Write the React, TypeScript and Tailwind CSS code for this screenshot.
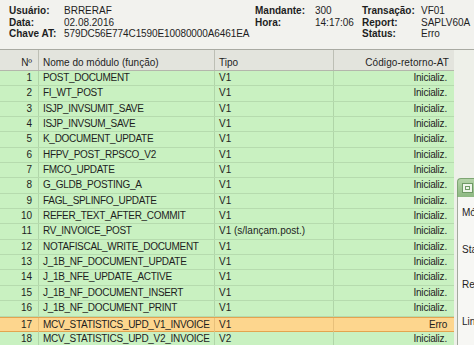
import React from "react";

const rows: [string, string, string][] = [
  ["POST_DOCUMENT", "V1", "Inicializ."],
  ["FI_WT_POST", "V1", "Inicializ."],
  ["ISJP_INVSUMIT_SAVE", "V1", "Inicializ."],
  ["ISJP_INVSUM_SAVE", "V1", "Inicializ."],
  ["K_DOCUMENT_UPDATE", "V1", "Inicializ."],
  ["HFPV_POST_RPSCO_V2", "V1", "Inicializ."],
  ["FMCO_UPDATE", "V1", "Inicializ."],
  ["G_GLDB_POSTING_A", "V1", "Inicializ."],
  ["FAGL_SPLINFO_UPDATE", "V1", "Inicializ."],
  ["REFER_TEXT_AFTER_COMMIT", "V1", "Inicializ."],
  ["RV_INVOICE_POST", "V1 (s/lançam.post.)", "Inicializ."],
  ["NOTAFISCAL_WRITE_DOCUMENT", "V1", "Inicializ."],
  ["J_1B_NF_DOCUMENT_UPDATE", "V1", "Inicializ."],
  ["J_1B_NFE_UPDATE_ACTIVE", "V1", "Inicializ."],
  ["J_1B_NF_DOCUMENT_INSERT", "V1", "Inicializ."],
  ["J_1B_NF_DOCUMENT_PRINT", "V1", "Inicializ."],
  ["MCV_STATISTICS_UPD_V1_INVOICE", "V1", "Erro"],
  ["MCV_STATISTICS_UPD_V2_INVOICE", "V2", "Inicializ."],
];

const font = { fontFamily: '"Liberation Sans", Arial, sans-serif' };

export default function App() {
  return (
    <div
      className="relative w-[474px] h-[345px] overflow-hidden bg-[#eef0e9] text-[10px] text-[#1e1e1e]"
      style={font}
    >
      {/* top info area */}
      <div className="h-[50px] bg-[#f2f2ee] border-b border-[#a9aaa2] pt-[5px] pl-[9px]">
        <div className="grid grid-cols-[55px_191px_60px_47px_59px_1fr] leading-[11.5px]">
          <div className="font-bold">Usuário:</div>
          <div>BRRERAF</div>
          <div className="font-bold">Mandante:</div>
          <div>300</div>
          <div className="font-bold">Transação:</div>
          <div>VF01</div>

          <div className="font-bold">Data:</div>
          <div>02.08.2016</div>
          <div className="font-bold">Hora:</div>
          <div>14:17:06</div>
          <div className="font-bold">Report:</div>
          <div>SAPLV60A</div>

          <div className="font-bold">Chave AT:</div>
          <div className="tracking-[-0.1px]">579DC56E774C1590E10080000A6461EA</div>
          <div></div>
          <div></div>
          <div className="font-bold">Status:</div>
          <div>Erro</div>
        </div>
      </div>

      <div className="flex">
        {/* grid */}
        <div className="w-[454px] shrink-0">
          <div className="grid grid-cols-[39px_176px_119px_120px] h-[21px] bg-[#e3e4dd] border-b border-[#b4b6ac]">
            <div className="border-r border-[#bdbfb5] text-right pr-[6px] pt-[7px] leading-[12px]">Nº</div>
            <div className="border-r border-[#bdbfb5] pl-[4px] pt-[7px] leading-[12px]">Nome do módulo (função)</div>
            <div className="border-r border-[#bdbfb5] pl-[4px] pt-[7px] leading-[12px]">Tipo</div>
            <div className="text-right pr-[5px] pt-[7px] leading-[12px] tracking-[0.1px]">Código-retorno-AT</div>
          </div>
          {rows.map((r, i) => {
            const err = i === 16;
            return (
              <div
                key={i}
                className={
                  err
                    ? "grid grid-cols-[39px_176px_119px_120px] h-[15.35px] leading-[14px] bg-[#fdd68e] border-y border-[#e3a450]"
                    : "grid grid-cols-[39px_176px_119px_120px] h-[15.35px] leading-[14px] bg-[#c9f1c1] border-b border-[#b6dbae]"
                }
              >
                <div className={err ? "border-r border-[#e8c07a] text-right pr-[6px]" : "border-r border-[#b0d5a8] text-right pr-[6px]"}>
                  {i + 1}
                </div>
                <div className={err ? "border-r border-[#e8c07a] pl-[4px] tracking-[-0.3px] whitespace-nowrap overflow-hidden" : "border-r border-[#b0d5a8] pl-[4px] tracking-[-0.3px] whitespace-nowrap overflow-hidden"}>
                  {r[0]}
                </div>
                <div className={err ? "border-r border-[#e8c07a] pl-[4px] whitespace-nowrap" : "border-r border-[#b0d5a8] pl-[4px] whitespace-nowrap"}>
                  {r[1]}
                </div>
                <div className="text-right pr-[7px] tracking-[-0.2px]">{r[2]}</div>
              </div>
            );
          })}
        </div>
        <div className="flex-1"></div>
      </div>

      {/* overlapping dialog window */}
      <div className="absolute left-[457px] top-[178px] w-[60px] h-[180px] flex flex-col">
        <div className="h-[19px] rounded-tl-[4px] bg-gradient-to-b from-[#b4d4a8] to-[#8db882] border-l border-t border-[#7ea673] flex items-center pl-[4px]">
          <div className="w-[11px] h-[10px] bg-[#eef5ea] border border-[#6f9a65] flex items-center justify-center">
            <div className="w-[5px] h-[4px] border border-[#6f9a65]"></div>
          </div>
        </div>
        <div className="flex-1 bg-[#f7f7f4] border-l border-[#a3aa9e] pl-[4px] whitespace-nowrap">
          <div className="pt-[10px] leading-[12px]">Módulo</div>
          <div className="pt-[25px] leading-[12px]">Status</div>
          <div className="pt-[23px] leading-[12px]">Resultado</div>
          <div className="pt-[25px] leading-[12px]">Linha</div>
        </div>
      </div>
    </div>
  );
}
